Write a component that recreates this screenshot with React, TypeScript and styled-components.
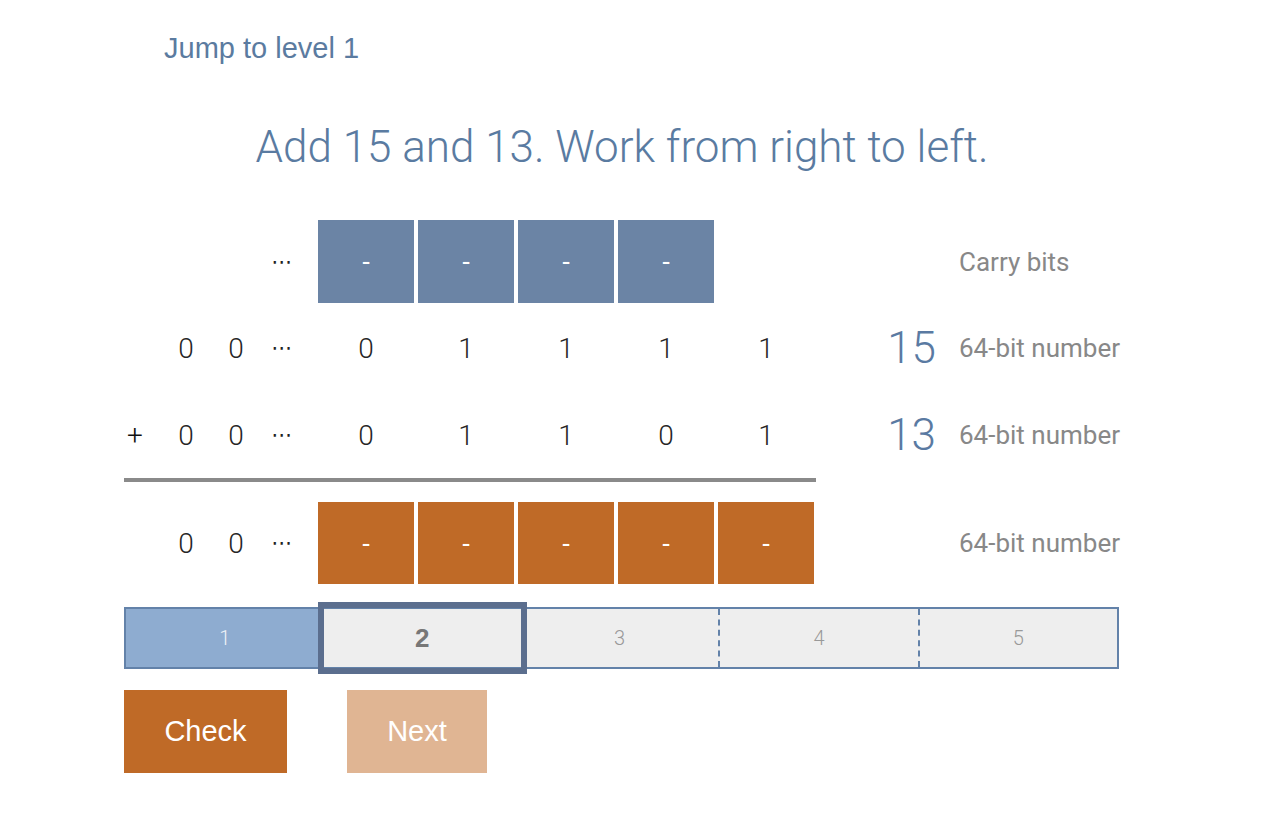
import React from 'react';
import styled, { createGlobalStyle } from 'styled-components';

const GlobalStyle = createGlobalStyle`
  html, body {
    margin: 0;
    padding: 0;
    background: #fff;
  }
  body {
    font-family: Roboto, "Liberation Sans", sans-serif;
  }
`;

const COLUMNS = '37px 50px 50px 55px repeat(5, 100px) 120px 23px 1fr';

const Page = styled.div`
  width: 996px;
  padding: 32px 0 40px 124px;
`;

const JumpLink = styled.a`
  display: block;
  padding-left: 40px;
  font-family: "Liberation Sans", Arial, sans-serif;
  font-size: 29px;
  line-height: 32px;
  color: #5b7ba0;
  text-decoration: none;
  cursor: pointer;
`;

const Title = styled.h1`
  margin: 57px 0 0;
  text-align: center;
  font-family: Roboto, sans-serif;
  font-weight: 300;
  font-size: 44px;
  line-height: 52px;
  color: #5a7ba1;
`;

const SumRow = styled.div<{ $height: number; $top?: number }>`
  display: grid;
  grid-template-columns: ${COLUMNS};
  height: ${p => p.$height}px;
  margin-top: ${p => p.$top ?? 0}px;
  align-items: center;
`;

const Cell = styled.div<{ $col: number }>`
  grid-column: ${p => p.$col};
  text-align: center;
`;

const Digit = styled(Cell)`
  font-family: Roboto, sans-serif;
  font-weight: 300;
  font-size: 28px;
  color: #262626;
`;

const Sign = styled(Digit)`
  text-align: left;
  padding-left: 3px;
  color: #111;
`;

const Dots = styled(Cell)`
  font-family: "DejaVu Sans", sans-serif;
  font-size: 21px;
  color: #222;
  padding-right: 13px;
`;

const BitBox = styled.div<{ $col: number; $tone: 'carry' | 'result' }>`
  grid-column: ${p => p.$col};
  align-self: stretch;
  margin: 0 2px;
  display: flex;
  align-items: center;
  justify-content: center;
  background: ${p => (p.$tone === 'carry' ? '#6b84a5' : '#bf6a27')};
  color: #fff;
  font-family: "Liberation Sans", Arial, sans-serif;
  font-size: 26px;
`;

const BigNumber = styled(Cell)`
  text-align: right;
  font-family: Roboto, sans-serif;
  font-weight: 300;
  font-size: 44px;
  color: #5a7aa2;
`;

const RowLabel = styled.div`
  grid-column: 12;
  font-family: Roboto, sans-serif;
  font-size: 26px;
  color: #888;
  white-space: nowrap;
`;

const Rule = styled.div`
  width: 692px;
  height: 4px;
  margin-top: 1px;
  background: #8a8a8a;
`;

const Progress = styled.div`
  display: flex;
  box-sizing: border-box;
  width: 995px;
  height: 62px;
  margin-top: 23px;
  border: 2px solid #6382a9;
`;

const Step = styled.div<{ $state: 'done' | 'current' | 'todo'; $divider: boolean }>`
  position: relative;
  flex: 1;
  display: flex;
  align-items: center;
  justify-content: center;
  background: ${p => (p.$state === 'done' ? '#8eacd0' : '#eeeeee')};
  border-left: ${p => (p.$divider ? '2px dashed #6382a9' : 'none')};
  font-family: ${p => (p.$state === 'current' ? '"Liberation Sans", Arial' : 'Roboto')}, sans-serif;
  font-weight: ${p => (p.$state === 'current' ? 700 : 300)};
  font-size: ${p => (p.$state === 'current' ? 26 : 20)}px;
  color: ${p => (p.$state === 'done' ? '#eef2f7' : p.$state === 'current' ? '#777' : '#999')};

  ${p =>
    p.$state === 'current' &&
    `
    &::after {
      content: '';
      position: absolute;
      z-index: 1;
      top: -7px;
      bottom: -7px;
      left: -5px;
      right: -6px;
      border: 6px solid #5b6e8e;
    }
  `}
`;

const Actions = styled.div`
  display: flex;
  gap: 60px;
  margin-top: 21px;
`;

const ActionButton = styled.button<{ $width: number; $muted?: boolean }>`
  width: ${p => p.$width}px;
  height: 83px;
  border: none;
  padding: 0;
  background: ${p => (p.$muted ? '#e0b593' : '#bf6a27')};
  color: #fff;
  font-family: "Liberation Sans", Arial, sans-serif;
  font-size: 29px;
  cursor: pointer;
`;

const first = [0, 1, 1, 1, 1];
const second = [0, 1, 1, 0, 1];
const steps = [1, 2, 3, 4, 5];
const current = 2;

export default function App() {
  return (
    <>
      <GlobalStyle />
      <Page>
        <JumpLink>Jump to level 1</JumpLink>
        <Title>Add 15 and 13. Work from right to left.</Title>

        <SumRow $height={83} $top={47}>
          <Dots $col={4}>⋯</Dots>
          {[0, 1, 2, 3].map(i => (
            <BitBox key={i} $col={5 + i} $tone="carry">-</BitBox>
          ))}
          <RowLabel>Carry bits</RowLabel>
        </SumRow>

        <SumRow $height={90}>
          <Digit $col={2}>0</Digit>
          <Digit $col={3}>0</Digit>
          <Dots $col={4}>⋯</Dots>
          {first.map((b, i) => (
            <Digit key={i} $col={5 + i}>{b}</Digit>
          ))}
          <BigNumber $col={10}>15</BigNumber>
          <RowLabel>64-bit number</RowLabel>
        </SumRow>

        <SumRow $height={84}>
          <Sign $col={1}>+</Sign>
          <Digit $col={2}>0</Digit>
          <Digit $col={3}>0</Digit>
          <Dots $col={4}>⋯</Dots>
          {second.map((b, i) => (
            <Digit key={i} $col={5 + i}>{b}</Digit>
          ))}
          <BigNumber $col={10}>13</BigNumber>
          <RowLabel>64-bit number</RowLabel>
        </SumRow>

        <Rule />

        <SumRow $height={82} $top={20}>
          <Digit $col={2}>0</Digit>
          <Digit $col={3}>0</Digit>
          <Dots $col={4}>⋯</Dots>
          {[0, 1, 2, 3, 4].map(i => (
            <BitBox key={i} $col={5 + i} $tone="result">-</BitBox>
          ))}
          <RowLabel>64-bit number</RowLabel>
        </SumRow>

        <Progress>
          {steps.map((n, i) => (
            <Step
              key={n}
              $state={n < current ? 'done' : n === current ? 'current' : 'todo'}
              $divider={i > 0 && n !== current && n !== current + 1}
            >
              {n}
            </Step>
          ))}
        </Progress>

        <Actions>
          <ActionButton $width={163}>Check</ActionButton>
          <ActionButton $width={140} $muted>Next</ActionButton>
        </Actions>
      </Page>
    </>
  );
}
